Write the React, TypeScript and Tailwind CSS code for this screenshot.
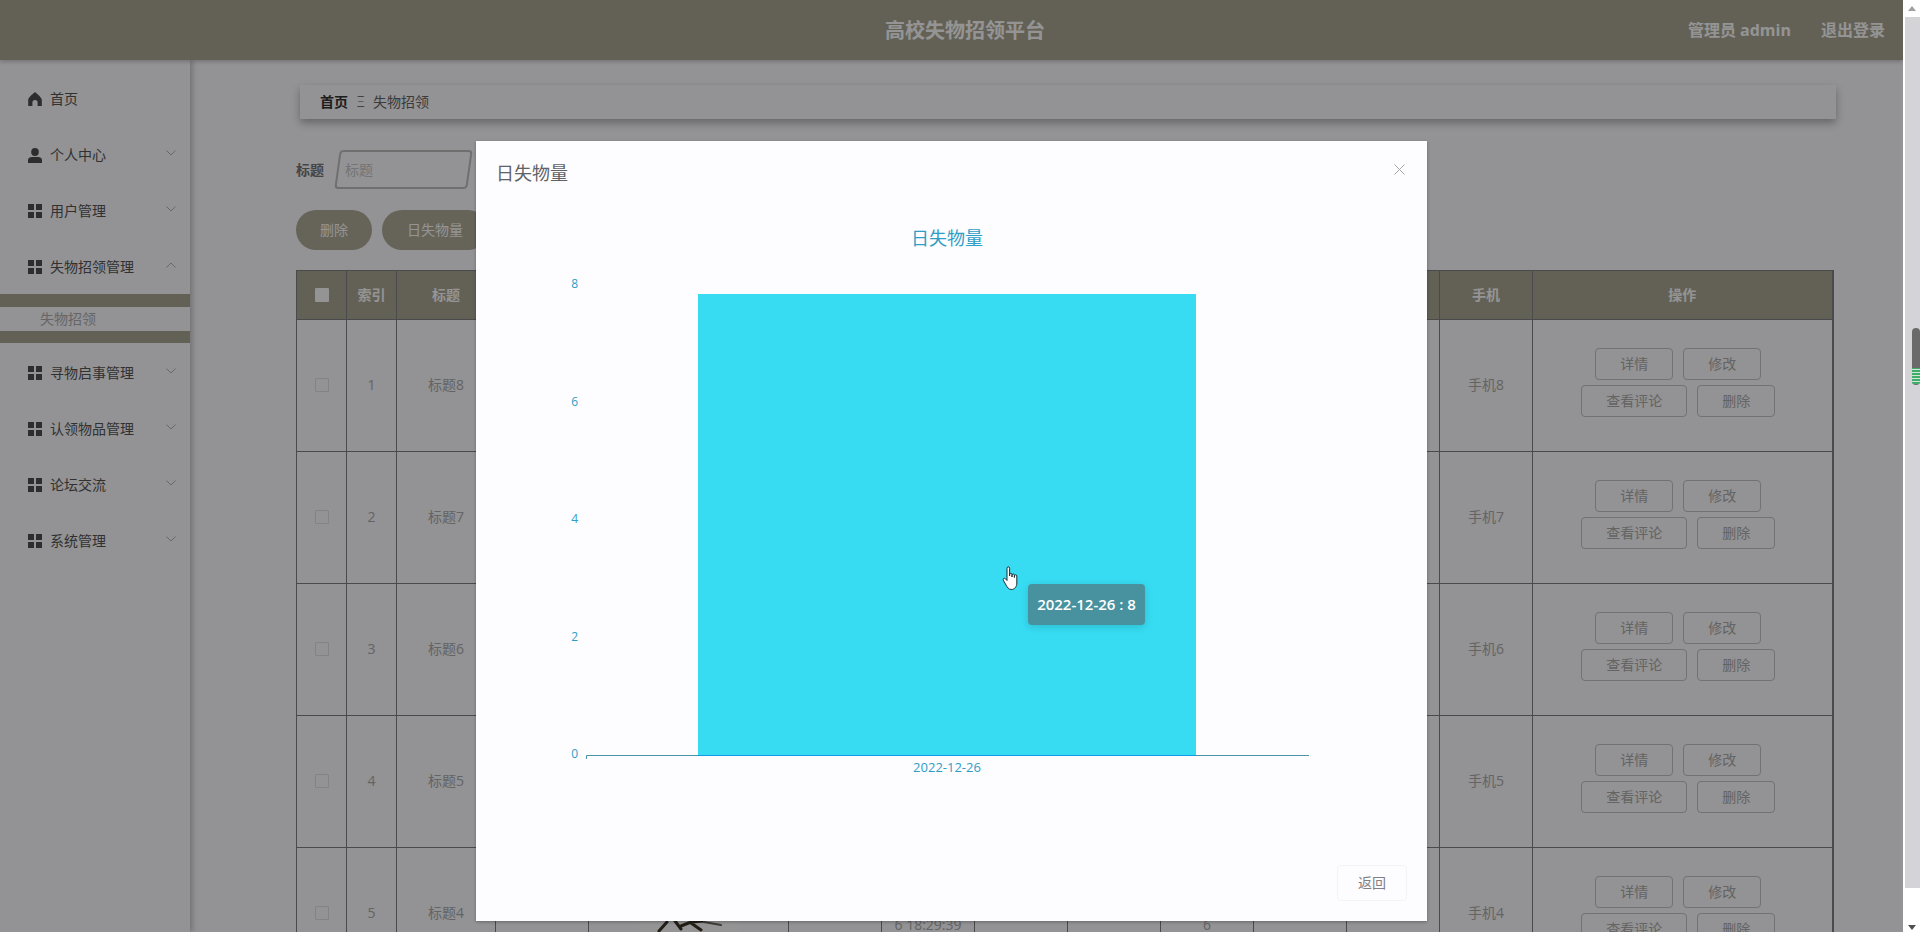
import React from "react";

const Home = () => (
  <svg width="14" height="14" viewBox="0 0 14 14" className="fill-[#4e4e4e]">
    <path d="M7 0.3 C8 0.3 13.8 6 13.8 7.4 V14 H9.6 V10.6 A2.6 2.6 0 0 0 4.4 10.6 V14 H0.2 V7.4 C0.2 6 6 0.3 7 0.3 Z" />
  </svg>
);
const User = () => (
  <svg width="14" height="15" viewBox="0 0 14 15" className="fill-[#4e4e4e]">
    <ellipse cx="7" cy="4" rx="3.8" ry="4" />
    <path d="M0 15 V12 C0 10 2 9 4 9 H10 C12 9 14 10 14 12 V15 Z" />
  </svg>
);
const Grid = () => (
  <svg width="14" height="14" viewBox="0 0 14 14" className="fill-[#4e4e4e]">
    <rect x="0" y="0" width="6" height="6" />
    <rect x="8" y="0" width="6" height="6" />
    <rect x="0" y="8" width="6" height="6" />
    <rect x="8" y="8" width="6" height="6" />
  </svg>
);
const Chevron = ({ up }: { up?: boolean }) => (
  <svg width="10" height="6" viewBox="0 0 10 6" fill="none" className="ml-auto mr-[14px] mb-[5px] stroke-[#b4b4b4]">
    <path d={up ? "M0.5 5.5 L5 1 L9.5 5.5" : "M0.5 0.5 L5 5 L9.5 0.5"} />
  </svg>
);

function Item({ icon, label, arrow, up }: { icon: React.ReactNode; label: string; arrow?: boolean; up?: boolean }) {
  return (
    <div className="flex items-center h-[56px] pl-[28px] text-[14px] text-[#555555]">
      <span className="w-[14px] mr-[8px] flex justify-center">{icon}</span>
      <span className="mb-[2px]">{label}</span>
      {arrow && <Chevron up={up} />}
    </div>
  );
}

const columns: [string, number][] = [
  ["", 50],
  ["索引", 50],
  ["标题", 99],
  ["物品名称", 93],
  ["图片", 200],
  ["物品类别", 93],
  ["丢失时间", 93],
  ["丢失地点", 93],
  ["联系人", 93],
  ["发布日期", 93],
  ["物品数量", 93],
  ["账号", 93],
  ["手机", 93],
  ["操作", 300],
];

const rows = [8, 7, 6, 5, 4];

function Action({ label, w }: { label: string; w: string }) {
  return (
    <button className={`${w} h-[32px] border border-[#c4c4c4] rounded-[4px] text-[14px] text-[#acacac] flex items-center justify-center`}>
      <span className="mb-[1px]">{label}</span>
    </button>
  );
}

function Row({ n, i }: { n: number; i: number }) {
  const c = "border border-[#807f81] text-center text-[14px] text-[#acacac] leading-[24px] pt-0 px-0 pb-[2px]";
  return (
    <tr className="h-[132px]">
      <td className={c}>
        <span className="inline-block align-middle mb-[2px] w-[14px] h-[14px] border border-[#e2e2e2] rounded-[1px]" />
      </td>
      <td className={c}>{i}</td>
      <td className={c}>标题{n}</td>
      <td className={c}>物品名称{n}</td>
      <td className={c}>
        <div className="w-[100px] h-[100px] mx-auto bg-white">
          <svg width="100" height="100" viewBox="0 0 100 100" fill="none" strokeLinecap="round">
            <path d="M20 68 L28 59" stroke="#3c3526" strokeWidth="3" />
            <path d="M36 58 L42 66 M42 63 L52 59 L65 58 M52 60 L62 67" stroke="#3c3526" strokeWidth="3" />
            <path d="M65 59 L82 62" stroke="#6e6a62" strokeWidth="2" />
          </svg>
        </div>
      </td>
      <td className={c}>类别{n}</td>
      <td className={c}>
        2022-12-2
        <br />6 18:29:39
      </td>
      <td className={c}>地点{n}</td>
      <td className={c}>联系人{n}</td>
      <td className={c}>
        2022-12-2
        <br />6
      </td>
      <td className={c}>{n}</td>
      <td className={c}>账号{n}</td>
      <td className={c}>手机{n}</td>
      <td className={`${c} border-r-2`}>
        <div className="flex flex-col items-center gap-[5px] pb-[4px] pr-[8px]">
          <div className="flex gap-[10px]">
            <Action label="详情" w="w-[78px]" />
            <Action label="修改" w="w-[78px]" />
          </div>
          <div className="flex gap-[10px]">
            <Action label="查看评论" w="w-[106px]" />
            <Action label="删除" w="w-[78px]" />
          </div>
        </div>
      </td>
    </tr>
  );
}

function Chart() {
  const labels: [string, number][] = [
    ["8", 78],
    ["6", 196.5],
    ["4", 313.5],
    ["2", 431.5],
    ["0", 548],
  ];
  return (
    <svg width="951" height="660" viewBox="0 0 951 660" className="block">
      <text x="471" y="32.5" textAnchor="middle" dominantBaseline="central" fontSize="18" fill="#2f9ec6">
        日失物量
      </text>
      {labels.map(([t, y]) => (
        <text key={t} x="102" y={y} textAnchor="end" dominantBaseline="central" fontSize="12" fill="#2f9ec6">
          {t}
        </text>
      ))}
      <rect x="222" y="89" width="498" height="461" fill="#37dcf3" />
      <path d="M110.5 554 V550.5 H833" fill="none" stroke="#4a96a8" strokeWidth="1" />
      <path d="M222 550.5 H720" fill="none" stroke="#0f9ce0" strokeWidth="1.2" />
      <text x="471" y="561.5" textAnchor="middle" dominantBaseline="central" fontSize="13" fill="#2f9ec6">
        2022-12-26
      </text>
    </svg>
  );
}

export default function App() {
  return (
    <div className="w-[1920px] h-[932px] overflow-hidden flex bg-white font-['Open_Sans','Noto_Sans_CJK_SC',sans-serif]">
      <div className="relative w-[1903px] h-[932px] overflow-hidden bg-[#fdfcff] flex flex-col">
        <header className="h-[60px] shrink-0 bg-[#aba794] flex items-center text-white font-bold shadow-[0_2px_4px_rgba(0,0,0,0.2)] relative z-10">
          <div className="pl-[885px] text-[20px] mt-[2px]">高校失物招领平台</div>
          <div className="ml-auto pr-[18px] flex gap-[30px] text-[16px]">
            <span>管理员 admin</span>
            <span>退出登录</span>
          </div>
        </header>
        <div className="flex flex-1 min-h-0">
          <aside className="w-[190px] shrink-0 pt-[11px] shadow-[2px_0_6px_rgba(0,0,0,0.25)]">
            <Item icon={<Home />} label="首页" />
            <Item icon={<User />} label="个人中心" arrow />
            <Item icon={<Grid />} label="用户管理" arrow />
            <Item icon={<Grid />} label="失物招领管理" arrow up />
            <div className="-mt-px mb-[2px]">
              <div className="h-[13px] bg-[#aba794]" />
              <div className="h-[24px] pl-[40px] text-[14px] leading-[24px] text-[#b0b0b0]">失物招领</div>
              <div className="h-[12px] bg-[#aba794]" />
            </div>
            <Item icon={<Grid />} label="寻物启事管理" arrow />
            <Item icon={<Grid />} label="认领物品管理" arrow />
            <Item icon={<Grid />} label="论坛交流" arrow />
            <Item icon={<Grid />} label="系统管理" arrow />
          </aside>
          <main className="flex-1 pl-[106px] pt-[25px] min-w-0">
            <div className="ml-[4px] w-[1536px] h-[34px] flex items-center pl-[20px] pb-[2px] text-[14px] shadow-[0_4px_8px_rgba(0,0,0,0.3)]">
              <span className="font-bold text-[#333333]">首页</span>
              <span className="ml-[9px] mr-[9px] text-[#555555] font-light w-[7px]">Ξ</span>
              <span className="text-[#666666]">失物招领</span>
            </div>
            <div className="mt-[31px] h-[39px] flex items-center">
              <label className="w-[41px] text-[14px] font-bold text-[#777777]">标题</label>
              <div className="w-[133px] h-[39px] border-2 border-[#c0c0c0] rounded-[4px] -skew-x-[8deg] flex items-center">
                <input
                  placeholder="标题"
                  className="w-full h-full pl-[6px] bg-transparent outline-none text-[14px] skew-x-[8deg] placeholder:text-[#c8c8c8]"
                />
              </div>
            </div>
            <div className="mt-[21px] flex gap-[10px]">
              <button className="w-[76px] h-[40px] pb-[2px] rounded-[20px] bg-[#b0ac9a] text-white text-[14px]">删除</button>
              <button className="w-[106px] h-[40px] pb-[2px] rounded-[20px] bg-[#b0ac9a] text-white text-[14px]">日失物量</button>
            </div>
            <table className="mt-[20px] w-[1537px] table-fixed border-collapse">
              <colgroup>
                {columns.map(([l, w], i) => (
                  <col key={i} style={{ width: w }} />
                ))}
              </colgroup>
              <thead>
                <tr className="h-[49px] bg-[#aba794]">
                  {columns.map(([l], i) => (
                    <th
                      key={i}
                      className={`border border-[#807f81] text-center text-[14px] font-bold text-white pt-0 px-0 pb-[2px] ${i === 13 ? "border-r-2" : ""}`}
                    >
                      {i === 0 ? <span className="inline-block align-middle mb-[2px] w-[14px] h-[14px] bg-white rounded-[1px]" /> : l}
                    </th>
                  ))}
                </tr>
              </thead>
              <tbody>
                {rows.map((n, i) => (
                  <Row key={n} n={n} i={i + 1} />
                ))}
              </tbody>
            </table>
          </main>
        </div>
        <div className="absolute inset-0 z-20 bg-black/[0.42]" />
        <div className="absolute z-30 left-[476px] top-[141px] w-[951px] h-[780px] bg-[#fdfcff] flex flex-col shadow-[0_1px_3px_rgba(0,0,0,0.3)]">
          <div className="h-[64px] shrink-0 px-[20px] pt-[20px] flex items-start text-[18px] leading-[24px] text-[#606266] relative">
            <span>日失物量</span>
            <svg width="11" height="11" viewBox="0 0 11 11" className="absolute left-[918px] top-[23px] stroke-[#a4a6ac]">
              <path d="M0.5 0.5 L10.5 10.5 M10.5 0.5 L0.5 10.5" />
            </svg>
          </div>
          <Chart />
          <div className="flex justify-end pr-[20px]">
            <button className="w-[70px] h-[36px] pb-[2px] border border-[#f4f4f7] rounded-[4px] text-[14px] text-[#808084] bg-[#fdfcff]">
              返回
            </button>
          </div>
          <div className="absolute left-[552px] top-[443px] w-[117px] h-[41px] rounded-[4px] bg-[#48929f] text-white text-[15px] font-semibold flex items-center justify-center shadow-[0_2px_8px_rgba(0,0,0,0.15)]">
            2022-12-26 : 8
          </div>
          <svg width="19" height="25" viewBox="0 0 19 25" className="absolute left-[526px] top-[425px] fill-white stroke-[#1f2b33]">
            <path d="M5 2.2 a1.3 1.3 0 0 1 2.6 0 V10 V8.6 a1.2 1.2 0 0 1 2.4 0 V11 V9.2 a1.2 1.2 0 0 1 2.4 0 V11.5 V10 a1.2 1.2 0 0 1 2.4 0 V17 c0 3.5-2 6.5-5.5 6.5 H9.5 c-3 0-4-2-5.5-4.5 L1.3 14.2 c-.8-1.5 1-2.6 2.2-1.4 L5 14.5 Z" />
          </svg>
        </div>
      </div>
      <div className="w-[17px] h-[932px] shrink-0 flex flex-col items-end">
        <div className="h-[17px] w-full flex items-center justify-center">
          <div className="w-0 h-0 border-x-[4px] border-x-transparent border-b-[5px] border-b-[#a0a0a0]" />
        </div>
        <div className="w-[15px] h-[871px] bg-[#d4d4d8] flex flex-col items-end pt-[311px]">
          <div className="w-[8px] h-[57px] rounded-[4px] bg-[#6a6a6a] flex flex-col justify-end overflow-hidden">
            <div className="h-[16px] mb-[1px] bg-[repeating-linear-gradient(0deg,#3fae6a_0_2px,#cfe8d6_2px_3px)]" />
          </div>
        </div>
        <div className="flex-1 w-full flex items-end justify-center pb-[2px]">
          <div className="w-0 h-0 border-x-[4px] border-x-transparent border-t-[5px] border-t-[#505050]" />
        </div>
      </div>
    </div>
  );
}
